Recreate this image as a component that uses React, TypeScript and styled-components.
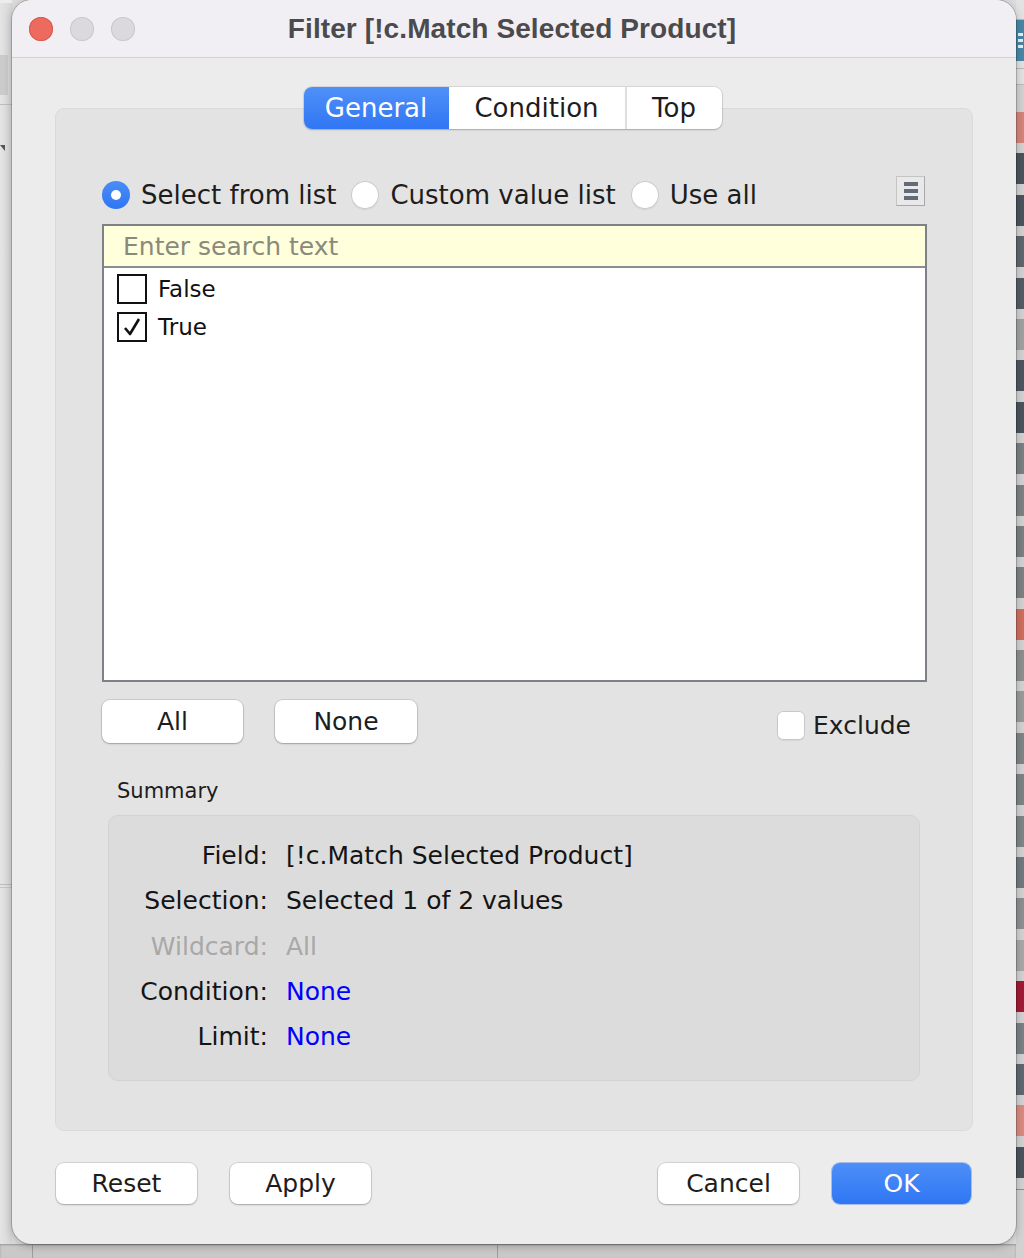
import React from "react";
import styled, { createGlobalStyle } from "styled-components";

const GlobalStyle = createGlobalStyle`
  html, body { margin: 0; padding: 0; }
  body {
    background: #d9d9d9;
    font-family: "DejaVu Sans", "Liberation Sans", sans-serif;
    color: #1d1d1d;
  }
  * { box-sizing: border-box; }
`;

const Screen = styled.div`
  width: 1024px;
  height: 1258px;
  display: grid;
  grid-template-columns: 12px 1004px 8px;
  grid-template-rows: 1244px 14px;
  background: #dcdcdc;
  overflow: hidden;
`;

const LeftApp = styled.div`
  grid-column: 1;
  grid-row: 1;
  display: flex;
  flex-direction: column;
  background: linear-gradient(90deg, #e4e4e4, #d6d6d6);
`;

const LeftBlock = styled.div<{ $h: number; $bg: string; $w?: number }>`
  height: ${(p) => p.$h}px;
  width: ${(p) => p.$w ?? 12}px;
  background: ${(p) => p.$bg};
  flex-shrink: 0;
`;

const LeftCaret = styled.div`
  width: 0;
  height: 0;
  margin: 6px 0 0 0;
  border-left: 5px solid transparent;
  border-right: 0 solid transparent;
  border-top: 6px solid #555;
`;

const BottomApp = styled.div`
  grid-column: 1 / 3;
  grid-row: 2;
  background: #c9c9c9;
  display: flex;
  box-shadow: inset 0 1px 2px rgba(0, 0, 0, 0.25);
`;

const BottomLine = styled.div<{ $w: number }>`
  width: ${(p) => p.$w}px;
  border-right: 1px solid #9d9d9d;
  flex-shrink: 0;
`;

const RightStripe = styled.div`
  grid-column: 3;
  grid-row: 1 / 3;
  display: flex;
  flex-direction: column;
  background: #d2d2d2;
`;

const StripeHead = styled.div`
  height: 112px;
  display: flex;
  flex-direction: column;
  flex-shrink: 0;
`;

const StripeLine = styled.div<{ $h: number }>`
  height: ${(p) => p.$h}px;
  border-bottom: 1px solid #b9b9b9;
  background: #e2e2e2;
  flex-shrink: 0;
`;

const StripeBlue = styled.div`
  height: 41px;
  background: #4788a6;
  display: flex;
  flex-direction: column;
  justify-content: center;
  gap: 3px;
  padding-left: 2px;
  flex-shrink: 0;
`;

const StripeTick = styled.div`
  width: 5px;
  height: 3px;
  background: #e8f0f4;
`;

const StripeBars = styled.div`
  display: flex;
  flex-direction: column;
  gap: 10.4px;
`;

const StripeBar = styled.div<{ $c: string }>`
  height: 31px;
  background: ${(p) => p.$c};
  flex-shrink: 0;
`;

const StripeFoot = styled.div`
  margin-top: 11px;
  border-bottom: 1px solid #8f8f8f;
`;

const Dialog = styled.div`
  grid-column: 2;
  grid-row: 1;
  display: flex;
  flex-direction: column;
  background: #ececec;
  border-radius: 20px;
  overflow: hidden;
  box-shadow: 0 0 0 1px rgba(0, 0, 0, 0.18), 0 2px 8px rgba(0, 0, 0, 0.25);
  position: relative;
  z-index: 1;
`;

const TitleBar = styled.div`
  height: 58px;
  flex-shrink: 0;
  display: grid;
  grid-template-columns: 1fr auto 1fr;
  align-items: center;
  background: #f2eff4;
  border-bottom: 1px solid #d3d1d5;
  padding: 0 17px;
`;

const Lights = styled.div`
  display: flex;
  gap: 17px;
`;

const Light = styled.span<{ $c: string; $b: string }>`
  width: 24px;
  height: 24px;
  border-radius: 50%;
  background: ${(p) => p.$c};
  box-shadow: inset 0 0 0 1px ${(p) => p.$b};
`;

const Title = styled.div`
  font-family: "Liberation Sans", Arial, sans-serif;
  font-weight: bold;
  font-size: 28px;
  color: #4b4a4d;
  letter-spacing: 0.1px;
  margin-right: 4px;
`;

const Body = styled.div`
  flex: 1;
  display: flex;
  flex-direction: column;
  padding: 29px 43px 0 43px;
`;

const Tabs = styled.div`
  align-self: center;
  display: flex;
  height: 42px;
  background: #ffffff;
  border-radius: 8px;
  box-shadow: 0 0 0 1px rgba(0, 0, 0, 0.08), 0 1px 2px rgba(0, 0, 0, 0.2);
  position: relative;
  z-index: 2;
  margin-right: 3px;
`;

const Tab = styled.div<{ $w: number; $active?: boolean; $sep?: boolean }>`
  width: ${(p) => p.$w}px;
  display: flex;
  align-items: center;
  justify-content: center;
  font-size: 26px;
  color: ${(p) => (p.$active ? "#ffffff" : "#1d1d1d")};
  background: ${(p) =>
    p.$active ? "linear-gradient(180deg, #4f90f8 0%, #3176f4 100%)" : "transparent"};
  border-radius: ${(p) => (p.$active ? "8px 0 0 8px" : "0")};
  border-left: ${(p) => (p.$sep ? "2px solid #dedede" : "none")};
`;

const Group = styled.div`
  margin-top: -21px;
  background: #e3e3e3;
  border: 1px solid #dadada;
  border-radius: 9px;
  padding: 71px 45px 49px 46px;
  display: flex;
  flex-direction: column;
`;

const RadioRow = styled.div`
  height: 30px;
  display: flex;
  align-items: center;
`;

const Radio = styled.span<{ $on?: boolean }>`
  width: 28px;
  height: 28px;
  border-radius: 50%;
  flex-shrink: 0;
  display: flex;
  align-items: center;
  justify-content: center;
  background: ${(p) => (p.$on ? "linear-gradient(180deg, #4a8cf7, #2f76f3)" : "#ffffff")};
  box-shadow: ${(p) =>
    p.$on ? "none" : "inset 0 0 0 1px #c9c9c9, 0 1px 1px rgba(0,0,0,0.08)"};
  &::after {
    content: "";
    display: ${(p) => (p.$on ? "block" : "none")};
    width: 10px;
    height: 10px;
    border-radius: 50%;
    background: #ffffff;
  }
`;

const RadioText = styled.span`
  font-size: 26px;
  margin: 0 15px 0 11px;
  white-space: nowrap;
`;

const MenuButton = styled.div`
  margin-left: auto;
  margin-right: 2px;
  margin-top: -8px;
  width: 29px;
  height: 30px;
  background: #e9e9e9;
  border: 1px solid #c4c4c4;
  border-right-color: #a9a9a9;
  border-bottom-color: #a9a9a9;
  display: flex;
  flex-direction: column;
  align-items: center;
  justify-content: center;
  gap: 3px;
`;

const MenuBar = styled.span`
  width: 14px;
  height: 4px;
  background: #646b78;
`;

const ListBox = styled.div`
  margin-top: 14px;
  height: 458px;
  border: 2px solid #7e8188;
  background: #ffffff;
  display: flex;
  flex-direction: column;
`;

const Search = styled.div`
  height: 42px;
  flex-shrink: 0;
  background: #ffffdb;
  border-bottom: 2px solid #8a8d93;
  display: flex;
  align-items: center;
  padding-left: 19px;
  font-size: 25px;
  color: #8a8a7c;
`;

const Items = styled.div`
  padding: 2px 13px;
  display: flex;
  flex-direction: column;
`;

const Item = styled.div`
  height: 38px;
  display: flex;
  align-items: center;
  gap: 11px;
  font-size: 23px;
  color: #111111;
`;

const Box = styled.span`
  width: 30px;
  height: 30px;
  border: 2px solid #111111;
  background: #ffffff;
  display: flex;
  align-items: center;
  justify-content: center;
  flex-shrink: 0;
`;

const ActionRow = styled.div`
  margin-top: 18px;
  height: 43px;
  display: flex;
  align-items: center;
  gap: 32px;
  padding-right: 16px;
`;

const Button = styled.div<{ $w: number; $primary?: boolean }>`
  width: ${(p) => p.$w}px;
  height: 100%;
  border-radius: 8px;
  display: flex;
  align-items: center;
  justify-content: center;
  font-size: 25px;
  color: ${(p) => (p.$primary ? "#ffffff" : "#1d1d1d")};
  background: ${(p) =>
    p.$primary ? "linear-gradient(180deg, #4d8ff8 0%, #2f76f3 100%)" : "#ffffff"};
  box-shadow: ${(p) =>
    p.$primary
      ? "0 0 0 1px rgba(40,100,230,0.35)"
      : "0 0 0 1px rgba(0,0,0,0.10), 0 1px 2px rgba(0,0,0,0.22)"};
  flex-shrink: 0;
`;

const ExcludeWrap = styled.div`
  margin-left: auto;
  display: flex;
  align-items: center;
  gap: 8px;
  margin-top: 8px;
  font-size: 25px;
`;

const SmallBox = styled.span`
  width: 28px;
  height: 29px;
  border-radius: 6px;
  background: #ffffff;
  box-shadow: inset 0 0 0 1px #c8c8c8, 0 1px 1px rgba(0, 0, 0, 0.06);
`;

const SummaryLabel = styled.div`
  margin: 35px 0 0 15px;
  font-size: 21px;
  height: 26px;
  line-height: 26px;
`;

const SummaryBox = styled.div`
  margin: 11px 7px 0 6px;
  height: 266px;
  background: #dcdcdc;
  border: 1px solid #d2d2d2;
  border-radius: 10px;
  padding-top: 17px;
  display: grid;
  grid-template-columns: 159px 1fr;
  grid-auto-rows: 45.3px;
  column-gap: 18px;
  align-content: start;
`;

const SumKey = styled.div<{ $dim?: boolean }>`
  text-align: right;
  font-size: 25px;
  line-height: 45px;
  color: ${(p) => (p.$dim ? "#a8a8a8" : "#141414")};
  white-space: nowrap;
`;

const SumVal = styled.div<{ $tone?: "dim" | "link" }>`
  font-size: 25px;
  line-height: 45px;
  white-space: nowrap;
  color: ${(p) => (p.$tone === "dim" ? "#a8a8a8" : p.$tone === "link" ? "#0000ff" : "#141414")};
`;

const Footer = styled.div`
  margin-top: 32px;
  height: 41px;
  display: flex;
  gap: 33px;
  padding: 0 2px 0 1px;
`;

const Spacer = styled.div`
  flex: 1;
`;

const stripeColors = [
  "#d4857a", "#4b535d", "#4b535d", "#5e676e", "#535c66", "#a0a2a2", "#4d5660",
  "#4b535d", "#7a7f82", "#7d8285", "#7a7f82", "#7d8285", "#cf6f5e", "#8c908f",
  "#999b9a", "#7f8585", "#7d8386", "#7f8585", "#707a7e", "#8c9090", "#a8a8a8",
  "#a31a35", "#7a8185", "#5e6870", "#d98a80", "#4b535d",
];

const Check = () => (
  <svg width="22" height="22" viewBox="0 0 22 22">
    <path d="M4 12 L9 18 L18 3" fill="none" stroke="#111" strokeWidth="2.6" strokeLinejoin="round" />
  </svg>
);

const summary: { k: string; v: string; tone?: "dim" | "link" }[] = [
  { k: "Field:", v: "[!c.Match Selected Product]" },
  { k: "Selection:", v: "Selected 1 of 2 values" },
  { k: "Wildcard:", v: "All", tone: "dim" },
  { k: "Condition:", v: "None", tone: "link" },
  { k: "Limit:", v: "None", tone: "link" },
];

export default function App() {
  return (
    <>
      <GlobalStyle />
      <Screen>
        <LeftApp>
          <LeftBlock $h={3} $bg="#ececec" />
          <LeftBlock $h={52} $bg="transparent" />
          <LeftBlock $h={40} $bg="#cbcbcb" $w={8} />
          <LeftBlock $h={9} $bg="transparent" />
          <LeftBlock $h={1} $bg="#bdbdbd" />
          <LeftBlock $h={34} $bg="transparent" />
          <LeftCaret />
          <LeftBlock $h={733} $bg="transparent" />
          <LeftBlock $h={1} $bg="#bdbdbd" />
          <LeftBlock $h={2} $bg="transparent" />
          <LeftBlock $h={1} $bg="#c4c4c4" />
        </LeftApp>

        <Dialog>
          <TitleBar>
            <Lights>
              <Light $c="#ed6a5e" $b="#d85a4f" />
              <Light $c="#dcd9dd" $b="#cbc8cc" />
              <Light $c="#dcd9dd" $b="#cbc8cc" />
            </Lights>
            <Title>Filter [!c.Match Selected Product]</Title>
            <div />
          </TitleBar>

          <Body>
            <Tabs>
              <Tab $w={145} $active>General</Tab>
              <Tab $w={176}>Condition</Tab>
              <Tab $w={97} $sep>Top</Tab>
            </Tabs>

            <Group>
              <RadioRow>
                <Radio $on />
                <RadioText>Select from list</RadioText>
                <Radio />
                <RadioText>Custom value list</RadioText>
                <Radio />
                <RadioText>Use all</RadioText>
                <MenuButton>
                  <MenuBar />
                  <MenuBar />
                  <MenuBar />
                </MenuButton>
              </RadioRow>

              <ListBox>
                <Search>Enter search text</Search>
                <Items>
                  <Item>
                    <Box />
                    False
                  </Item>
                  <Item>
                    <Box>
                      <Check />
                    </Box>
                    True
                  </Item>
                </Items>
              </ListBox>

              <ActionRow>
                <Button $w={141}>All</Button>
                <Button $w={142}>None</Button>
                <ExcludeWrap>
                  <SmallBox />
                  Exclude
                </ExcludeWrap>
              </ActionRow>

              <SummaryLabel>Summary</SummaryLabel>
              <SummaryBox>
                {summary.map((r) => (
                  <React.Fragment key={r.k}>
                    <SumKey $dim={r.tone === "dim"}>{r.k}</SumKey>
                    <SumVal $tone={r.tone}>{r.v}</SumVal>
                  </React.Fragment>
                ))}
              </SummaryBox>
            </Group>

            <Footer>
              <Button $w={141}>Reset</Button>
              <Button $w={141}>Apply</Button>
              <Spacer />
              <Button $w={141}>Cancel</Button>
              <Button $w={139} $primary>OK</Button>
            </Footer>
          </Body>
        </Dialog>

        <RightStripe>
          <StripeHead>
            <StripeLine $h={20} />
            <StripeBlue>
              <StripeTick />
              <StripeTick />
              <StripeTick />
            </StripeBlue>
            <StripeLine $h={8} />
            <StripeLine $h={16} />
          </StripeHead>
          <StripeBars>
            {stripeColors.map((c, i) => (
              <StripeBar key={i} $c={c} />
            ))}
          </StripeBars>
          <StripeFoot />
        </RightStripe>

        <BottomApp>
          <BottomLine $w={33} />
          <BottomLine $w={465} />
        </BottomApp>
      </Screen>
    </>
  );
}
